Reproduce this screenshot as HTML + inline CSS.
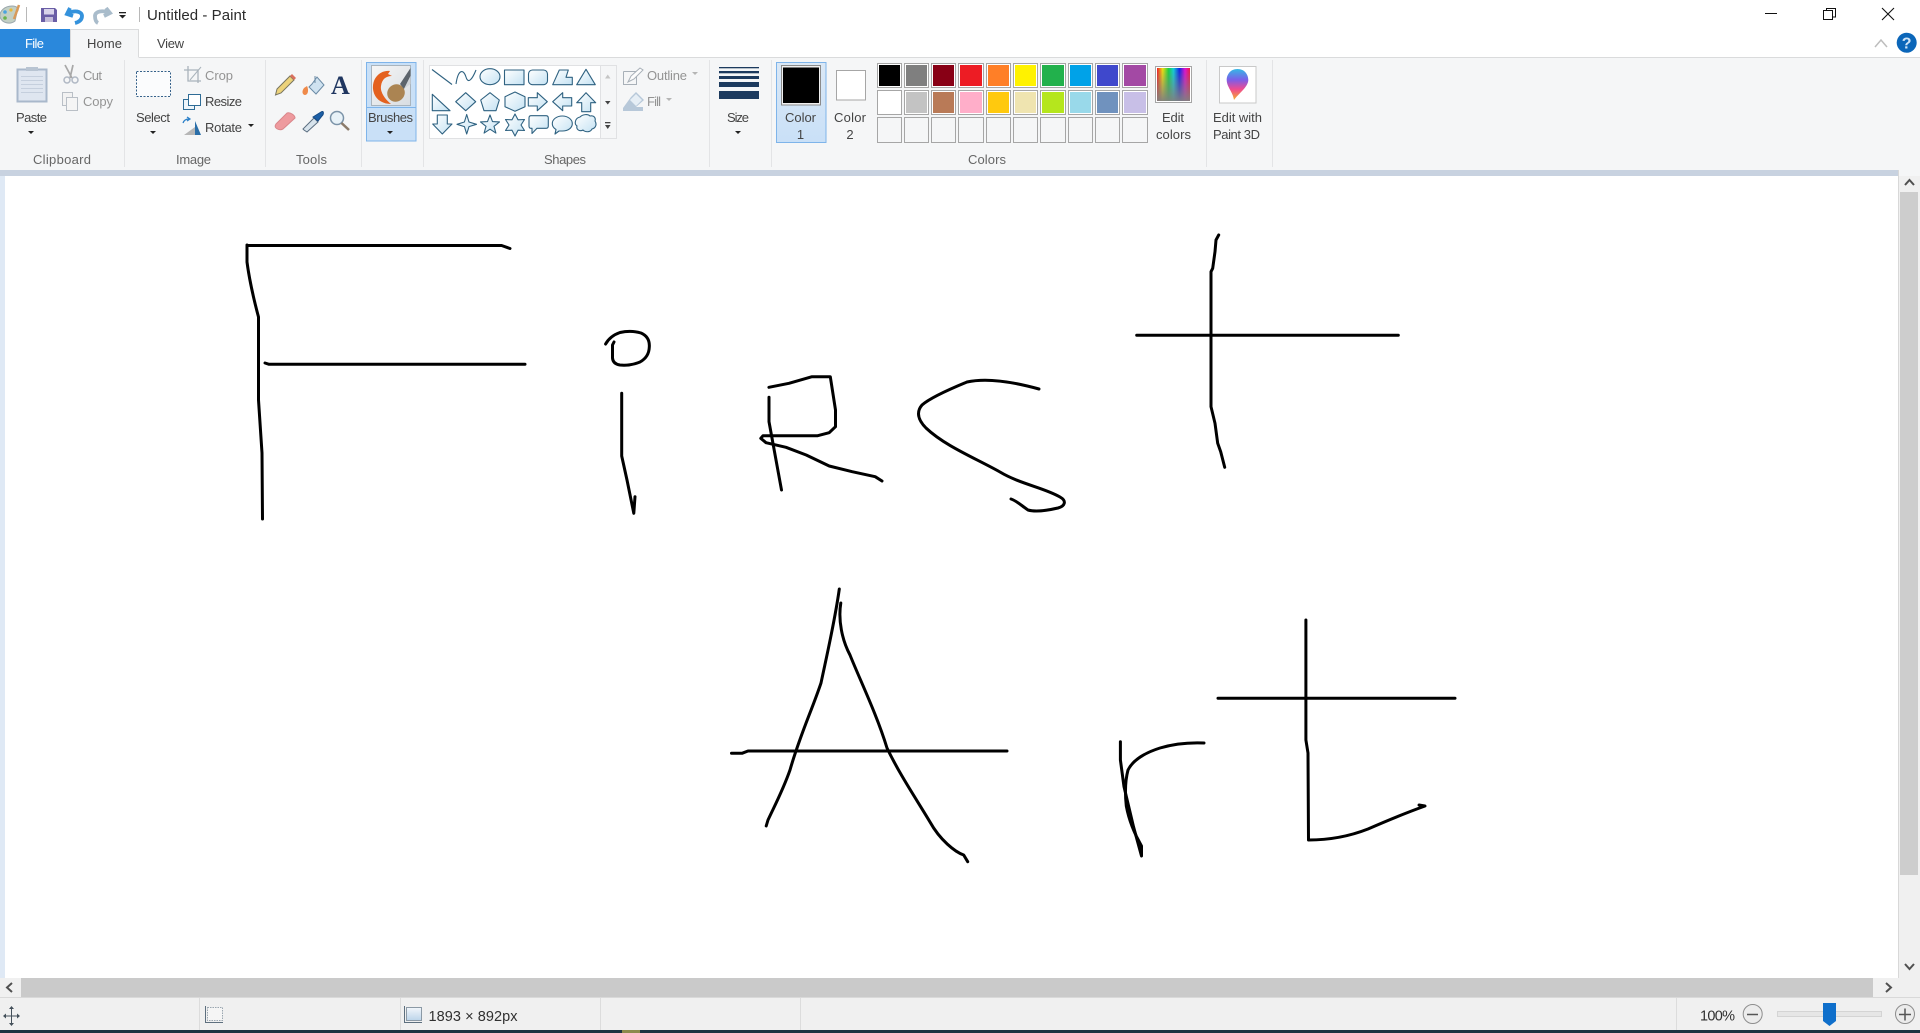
<!DOCTYPE html>
<html><head><meta charset="utf-8"><title>Untitled - Paint</title>
<style>
html,body{margin:0;padding:0;width:1920px;height:1033px;overflow:hidden;background:#fff}
svg{display:block;position:absolute;left:0;top:0}
text{font-family:"Liberation Sans",sans-serif;font-size:13px;fill:#444}
.g{fill:#949494}.l{fill:#666}
.ink{fill:none;stroke:#000;stroke-width:3;stroke-linejoin:round;stroke-linecap:round}
.sh{fill:url(#sg);stroke:#2f6281;stroke-width:1.1;stroke-linejoin:round}
.sep{stroke:#e3e4e6;stroke-width:1}
.sw{stroke:#a6a6a6;stroke-width:1;fill:#fff}
</style></head><body>
<svg width="1920" height="1033" viewBox="0 0 1920 1033" xmlns="http://www.w3.org/2000/svg">
<defs>
<linearGradient id="sg" x1="0" y1="0" x2="1" y2="1"><stop offset="0" stop-color="#ffffff"/><stop offset="1" stop-color="#c4e2f3"/></linearGradient>
<linearGradient id="rb" x1="0" y1="0" x2="1" y2="0"><stop offset="0" stop-color="#f01828"/><stop offset=".17" stop-color="#f0e010"/><stop offset=".35" stop-color="#18d040"/><stop offset=".5" stop-color="#10d0d8"/><stop offset=".68" stop-color="#1020e8"/><stop offset=".85" stop-color="#e010d0"/><stop offset="1" stop-color="#f01840"/></linearGradient>
<linearGradient id="gf" x1="0" y1="0" x2="0" y2="1"><stop offset="0" stop-color="#808080" stop-opacity="0"/><stop offset="1" stop-color="#808080" stop-opacity=".95"/></linearGradient>
<linearGradient id="dp" x1="0" y1="0" x2="0" y2="1"><stop offset="0" stop-color="#35b8e6"/><stop offset=".35" stop-color="#7c5ee8"/><stop offset=".65" stop-color="#ef4a90"/><stop offset="1" stop-color="#f4b02a"/></linearGradient>
<linearGradient id="br" x1="0" y1="0" x2="1" y2="1"><stop offset="0" stop-color="#f6f6f6"/><stop offset="1" stop-color="#d8dde2"/></linearGradient>
<linearGradient id="cb" x1="0" y1="0" x2="0" y2="1"><stop offset="0" stop-color="#dbe8f6"/><stop offset="1" stop-color="#c9e0f7"/></linearGradient>
<linearGradient id="b3" x1="0" y1="0" x2="0" y2="1"><stop offset="0" stop-color="#f2f6fb"/><stop offset="1" stop-color="#bcd4ea"/></linearGradient>
</defs>

<!-- title bar + tabs -->
<rect width="1920" height="58" fill="#fff"/>
<!-- app icon -->
<path d="M0,17 C-1,11 5,6 12,6 C17,6 20,9 17,12 L15,21 C10,25 2,23 0,17Z" fill="#c2cfc4" stroke="#9aa7ad"/>
<circle cx="5" cy="12" r="1.800" fill="#4aa3df"/><circle cx="5" cy="18" r="1.800" fill="#69b34c"/><circle cx="11" cy="10" r="1.600" fill="#e8b93a"/>
<path d="M19,5 L14,19" stroke="#d99a5a" stroke-width="2.500"/>
<line x1="26.500" y1="7" x2="26.500" y2="22" stroke="#b8b8b8"/>
<!-- save -->
<path d="M41,8 H55 L57,10 V22 H41Z" fill="#6a5ea6"/><rect x="44" y="9" width="10" height="5.500" fill="#d8d3ea"/><rect x="45" y="17" width="8" height="5" fill="#c3bcd9"/>
<!-- undo -->
<path d="M70,8 L67,14 L73,16 M68,13.500 C74,10 82,11 82,16 C82,20 79,22 75,23" fill="none" stroke="#3492dc" stroke-width="3.800"/>
<!-- redo -->
<path d="M106,8 L110,13 L104,16 M109,13 C103,10 95,11 95,16 C95,20 96,22 98,23" fill="none" stroke="#a9bccb" stroke-width="3.800"/>
<rect x="119" y="12" width="7" height="1.300" fill="#222"/><path d="M119,15 h7 l-3.500,3.500z" fill="#222"/>
<line x1="139.500" y1="7" x2="139.500" y2="22" stroke="#b8b8b8"/>
<text x="147" y="20" textLength="99" style="font-size:15px;fill:#2b2b2b">Untitled - Paint</text>
<!-- window controls -->
<line x1="1765" y1="13.500" x2="1777" y2="13.500" stroke="#111" stroke-width="1"/>
<rect x="1823.500" y="10.500" width="9" height="9" fill="none" stroke="#111"/><path d="M1826.500,10 V8.500 H1835.500 V17 H1833" fill="none" stroke="#111"/>
<path d="M1882,8 L1894,20 M1894,8 L1882,20" stroke="#111" stroke-width="1.100"/>
<path d="M1875,47 L1881,40 L1887,47" fill="none" stroke="#bdbdbd" stroke-width="1.500"/>
<circle cx="1906.700" cy="42.700" r="10" fill="#0b66b9"/>
<text x="1906.700" y="48.500" text-anchor="middle" style="font-size:16px;font-weight:bold;fill:#cfe4f7">?</text>
<!-- tabs -->
<rect x="0" y="29" width="70" height="28" fill="#2a88dc"/>
<text x="25" y="48" textLength="19" style="fill:#fff">File</text>
<rect x="70.500" y="29.500" width="68" height="29" fill="#f5f6f7" stroke="#dadbdc"/>
<text x="87" y="48" textLength="35">Home</text>
<text x="157" y="48" textLength="27">View</text>

<!-- ribbon -->
<rect x="0" y="57.500" width="1920" height="112.500" fill="#f5f6f7"/>
<line x1="0" y1="57.500" x2="70" y2="57.500" stroke="#dadbdc"/><line x1="139" y1="57.500" x2="1920" y2="57.500" stroke="#dadbdc"/>
<rect x="71" y="56" width="67" height="3" fill="#f5f6f7"/>
<g class="sep"><line x1="124.500" y1="60" x2="124.500" y2="167"/><line x1="265.500" y1="60" x2="265.500" y2="167"/><line x1="361.500" y1="60" x2="361.500" y2="167"/><line x1="423.500" y1="60" x2="423.500" y2="167"/><line x1="709.500" y1="60" x2="709.500" y2="167"/><line x1="771.500" y1="60" x2="771.500" y2="167"/><line x1="1206.500" y1="60" x2="1206.500" y2="167"/><line x1="1272.500" y1="60" x2="1272.500" y2="167"/></g>
<rect x="0" y="170" width="1898" height="6" fill="#c8d2e0"/>

<!-- paste -->
<rect x="17.500" y="69.500" width="29" height="32" fill="#dfe6f0" stroke="#a9b8cb" stroke-width="2"/>
<g stroke="#c5cfdd"><line x1="21" y1="76.500" x2="43" y2="76.500"/><line x1="21" y1="80.500" x2="43" y2="80.500"/><line x1="21" y1="84.500" x2="43" y2="84.500"/><line x1="21" y1="88.500" x2="43" y2="88.500"/><line x1="21" y1="92.500" x2="43" y2="92.500"/></g>
<rect x="26" y="67" width="12" height="4" fill="#b8c4d2"/>
<text x="16" y="122" textLength="31">Paste</text><path d="M28,131 h6 l-3,3z" fill="#222"/>
<!-- scissors / copy -->
<path d="M73,65 L70,78 M65,65 L72,78" stroke="#a8a8a8" stroke-width="1.700" fill="none"/><circle cx="67" cy="80" r="3" fill="none" stroke="#b0b8c4" stroke-width="1.500"/><circle cx="75" cy="80" r="3" fill="none" stroke="#b0b8c4" stroke-width="1.500"/>
<text x="83" y="80" textLength="19" class="g">Cut</text>
<rect x="62.500" y="92.500" width="10" height="13" fill="#f2f2f2" stroke="#b9bfc6"/><rect x="66.500" y="97.500" width="11" height="13" fill="#f5f5f5" stroke="#b9bfc6"/>
<text x="83" y="106" textLength="30" class="g">Copy</text>
<text x="33" y="164" textLength="58" class="l">Clipboard</text>
<!-- select -->
<rect x="136.500" y="71.500" width="34" height="25" fill="#fbfcfd" stroke="#35618a" stroke-dasharray="2 1.500"/>
<text x="136" y="122" textLength="34">Select</text><path d="M150,131 h6 l-3,3z" fill="#222"/>
<!-- crop -->
<path d="M188,66 V81 H201 M184,70 H198 V83" fill="none" stroke="#a9b3bb" stroke-width="1.300"/><path d="M190,80 L201,67" stroke="#a9b3bb"/>
<text x="205" y="80" textLength="28" class="g">Crop</text>
<!-- resize -->
<rect x="183.500" y="99.500" width="11" height="10" fill="#eef5fa" stroke="#2f6c96"/><rect x="188.500" y="94.500" width="12" height="11" fill="#fff" stroke="#2f6c96"/>
<text x="205" y="106" textLength="37">Resize</text>
<!-- rotate -->
<path d="M184,135 L195,127 V135Z" fill="#b6b6b6"/><path d="M195,135 V121 L201,135Z" fill="#2a6ea8"/><path d="M183,123 C184,120 186,119 189,119 M187,117 L190,119 L187,121" fill="none" stroke="#2a7fc8" stroke-width="1.200"/>
<text x="205" y="132" textLength="37">Rotate</text><path d="M248,124 h6 l-3,3z" fill="#222"/>
<text x="176" y="164" textLength="35" class="l">Image</text>
<!-- tools -->
<path d="M275.500,95 L277,89 L290,76 L294,80 L281,93Z" fill="#ecd27a" stroke="#77745f" stroke-width="1"/><path d="M290,76 L292,74 L296,78 L294,80Z" fill="#d9705e"/>
<path d="M312,84 L317,77 L324,85 L316,94 L309,87Z" fill="#cfe2f0" stroke="#6a8aa5"/><path d="M304,88 C301,92 303,95 305,95 C308,95 309,90 307,86Z" fill="#ef8a4a"/><path d="M315,76 V83" stroke="#6a8aa5"/>
<text x="331" y="94" textLength="19" style="font-family:'Liberation Serif',serif;font-size:26px;font-weight:bold;fill:#1f3660">A</text>
<path d="M276,124 L287,113 C290,112 295,115 295,118 L283,129 C279,131 273,128 276,124Z" fill="#ee9a9e" stroke="#d9868a"/>
<path d="M304,130 L303,129 L314,118 L318,122 L307,132Z" fill="#d7e3ec" stroke="#5a6d80"/><path d="M313,117 L321,112 C324,110 324,114 322,116 L318,121Z" fill="#1c5fa6" stroke="#174b85"/>
<circle cx="337" cy="118" r="6.500" fill="#e8f2f8" stroke="#7b93a8" stroke-width="1.500"/><path d="M341.500,123 L349,130" stroke="#8b7b6a" stroke-width="2.500"/>
<text x="296" y="164" textLength="31" class="l">Tools</text>
<!-- brushes -->
<rect x="366.500" y="62.500" width="49.500" height="78.500" fill="#c9e0f7" stroke="#7eb4ea"/>
<line x1="366" y1="107.500" x2="416" y2="107.500" stroke="#7eb4ea"/>
<rect x="371.500" y="65.500" width="39" height="40" fill="url(#br)" stroke="#a9b4bd"/>
<path d="M390,71 C380,70 372,78 373,89 C374,98 381,104 391,104 C386,100 380,93 381,86 C382,79 386,76 392,76 L388,74Z" fill="#e4611f"/>
<ellipse cx="396" cy="93" rx="9" ry="8.500" transform="rotate(-40 396 93)" fill="#ab8452"/>
<path d="M400,84 L404,89 L410.500,76 V68Z" fill="#5c646c"/><path d="M404,89 L410.500,76 V84Z" fill="#cfd4d9"/>
<text x="368" y="122" textLength="45">Brushes</text><path d="M387,131 h6 l-3,3z" fill="#222"/>

<!-- shapes gallery -->
<rect x="429.500" y="65.500" width="171" height="73" fill="#fff" stroke="#e0e1e3"/>
<rect x="600.500" y="65.500" width="16" height="73" fill="#f5f6f7" stroke="#e0e1e3"/>
<path d="M432,69.500 L452,84.500" stroke="#2f6281" stroke-width="1.100"/>
<path d="M456,84 C458,70 463,68 466,77 C468,84 472,80 476,70" fill="none" stroke="#2f6281" stroke-width="1.100"/>
<ellipse class="sh" cx="490" cy="76.700" rx="10" ry="8"/>
<rect class="sh" x="504.500" y="70" width="19.500" height="14.700"/>
<rect class="sh" x="528.500" y="70" width="19" height="14.700" rx="4"/>
<polygon class="sh" points="552.700,84.700 559.300,70 568.300,70 566,77.300 572.300,77.300 572.300,84.700"/>
<polygon class="sh" points="576.700,84.700 586,69.300 595.300,84.700"/>
<polygon class="sh" points="432.300,94.300 450,110.700 432.300,110.700"/>
<polygon class="sh" points="465.700,92.700 475.700,101.700 465.700,110.700 455.700,101.700"/>
<polygon class="sh" points="490,92.700 499.300,100 496,110.700 484,110.700 480.700,100"/>
<polygon class="sh" points="515,92 525,96.700 525,106.700 515,111.300 505,106.700 505,96.700"/>
<polygon class="sh" points="528.300,97.700 537.300,97.700 537.300,92.700 547.300,101.700 537.300,110.700 537.300,106 528.300,106"/>
<polygon class="sh" points="571.700,97.700 562.700,97.700 562.700,92.700 552.700,101.700 562.700,110.700 562.700,106 571.700,106"/>
<polygon class="sh" points="586,92.700 595.700,102.700 590.700,102.700 590.700,111.700 581.700,111.700 581.700,102.700 576.700,102.700"/>
<polygon class="sh" points="437.300,115 447.300,115 447.300,124 452,124 442.300,134 432.700,124 437.300,124"/>
<polygon class="sh" points="466.700,114.500 469,122 476.500,124.300 469,126.600 466.700,134 464.400,126.600 457,124.300 464.400,122"/>
<polygon class="sh" points="490,115 492.500,121.600 499.500,121.900 494,126.300 495.900,133.100 490,129.200 484.100,133.100 486,126.300 480.500,121.900 487.500,121.600"/>
<polygon class="sh" points="515,114 518,119.800 524.500,119.500 521,125 524.500,130.500 518,130.200 515,136 512,130.200 505.500,130.500 509,125 505.500,119.500 512,119.800"/>
<path class="sh" d="M531,115.700 H546 Q548.300,115.700 548.300,118 V126 Q548.300,128.300 546,128.300 H537 L532,133.500 V128.300 H531 Q529,128.300 529,126 V118 Q529,115.700 531,115.700Z"/>
<path class="sh" d="M562.300,116 C568,116 572.300,119.500 572.300,123.500 C572.300,128 568,131 562.300,131 L559,131 L555,134 L556,129.500 C553.500,128 552.300,126 552.300,123.500 C552.300,119.500 556.500,116 562.300,116Z"/>
<path class="sh" d="M580,117 C583,114 588,114 590,116 C594,115 596,118 595,121 C597,124 596,128 592,129 C590,133 585,132 583,130 C579,132 576,129 577,126 C574,124 575,118 580,117Z"/>
<path d="M605,78.500 h5.500 l-2.750,-4z" fill="#c5c5c5"/><path d="M605,101 h5.500 l-2.750,3.500z" fill="#444"/>
<rect x="605" y="122" width="5.500" height="1.300" fill="#444"/><path d="M605,125 h5.500 l-2.750,4z" fill="#444"/>
<!-- outline/fill -->
<path d="M623.500,71.500 H637 M623.500,71.500 V84.500 H636.500 V76" fill="none" stroke="#a8b0b8"/><path d="M628,82 L631,76 L640,68 L643,70 L634,79Z" fill="#fdfdfd" stroke="#a8b0b8"/>
<text x="647" y="80" textLength="40" class="g">Outline</text><path d="M692,72 h6 l-3,3z" fill="#b5b5b5"/>
<path d="M623,108 L631,97 L636,92 L644,100 L636,107 H643 V111 H623Z" fill="#b7c8d9"/><path d="M636,94 L642,100 L636,106 L630,100Z" fill="#e6eef5"/>
<text x="647" y="106" textLength="14" class="g">Fill</text><path d="M666,98 h6 l-3,3z" fill="#b5b5b5"/>
<text x="544" y="164" textLength="42" class="l">Shapes</text>
<!-- size -->
<g fill="#1c3a5e"><rect x="719" y="67" width="40" height="1.300"/><rect x="719" y="71" width="40" height="2.300"/><rect x="719" y="76" width="40" height="3"/><rect x="719" y="82" width="40" height="5"/><rect x="719" y="91" width="40" height="8"/></g>
<text x="727" y="122" textLength="22">Size</text><path d="M735,131 h6 l-3,3z" fill="#222"/>
<!-- color1 -->
<rect x="776.500" y="62.500" width="49.500" height="80" fill="url(#cb)" stroke="#7eb4ea"/>
<rect x="781.500" y="65.500" width="39" height="39.500" fill="#f0f0f0" stroke="#8b8b8b"/><rect x="783" y="67.500" width="36" height="35.500" fill="#000"/>
<text x="785" y="122" textLength="31">Color</text><text x="800.500" y="139" text-anchor="middle">1</text>
<!-- color2 -->
<rect x="836.500" y="70.500" width="29" height="29.500" class="sw"/>
<text x="834" y="122" textLength="32">Color</text><text x="850" y="139" text-anchor="middle">2</text>
<!-- palette -->
<g id="pal">
<g class="sw" style="fill:#fff">
<rect x="877.500" y="63.500" width="24" height="24"/><rect x="904.500" y="63.500" width="24" height="24"/><rect x="931.500" y="63.500" width="24" height="24"/><rect x="958.500" y="63.500" width="25" height="24"/><rect x="986.500" y="63.500" width="24" height="24"/><rect x="1013.500" y="63.500" width="24" height="24"/><rect x="1040.500" y="63.500" width="25" height="24"/><rect x="1068.500" y="63.500" width="24" height="24"/><rect x="1095.500" y="63.500" width="24" height="24"/><rect x="1122.500" y="63.500" width="25" height="24"/>
<rect x="877.500" y="90.500" width="24" height="24"/><rect x="904.500" y="90.500" width="24" height="24"/><rect x="931.500" y="90.500" width="24" height="24"/><rect x="958.500" y="90.500" width="25" height="24"/><rect x="986.500" y="90.500" width="24" height="24"/><rect x="1013.500" y="90.500" width="24" height="24"/><rect x="1040.500" y="90.500" width="25" height="24"/><rect x="1068.500" y="90.500" width="24" height="24"/><rect x="1095.500" y="90.500" width="24" height="24"/><rect x="1122.500" y="90.500" width="25" height="24"/>
</g>
<g style="fill:#f5f6f7;stroke:#a6a6a6">
<rect x="877.500" y="117.500" width="24" height="25"/><rect x="904.500" y="117.500" width="24" height="25"/><rect x="931.500" y="117.500" width="24" height="25"/><rect x="958.500" y="117.500" width="25" height="25"/><rect x="986.500" y="117.500" width="24" height="25"/><rect x="1013.500" y="117.500" width="24" height="25"/><rect x="1040.500" y="117.500" width="25" height="25"/><rect x="1068.500" y="117.500" width="24" height="25"/><rect x="1095.500" y="117.500" width="24" height="25"/><rect x="1122.500" y="117.500" width="25" height="25"/>
</g>
<rect x="879" y="65" width="21" height="21" fill="#000"/><rect x="906" y="65" width="21" height="21" fill="#7f7f7f"/><rect x="933" y="65" width="21" height="21" fill="#880015"/><rect x="960" y="65" width="22" height="21" fill="#ed1c24"/><rect x="988" y="65" width="21" height="21" fill="#ff7f27"/><rect x="1015" y="65" width="21" height="21" fill="#fff200"/><rect x="1042" y="65" width="22" height="21" fill="#22b14c"/><rect x="1070" y="65" width="21" height="21" fill="#00a2e8"/><rect x="1097" y="65" width="21" height="21" fill="#3f48cc"/><rect x="1124" y="65" width="22" height="21" fill="#a349a4"/>
<rect x="879" y="92" width="21" height="21" fill="#fff"/><rect x="906" y="92" width="21" height="21" fill="#c3c3c3"/><rect x="933" y="92" width="21" height="21" fill="#b97a57"/><rect x="960" y="92" width="22" height="21" fill="#ffaec9"/><rect x="988" y="92" width="21" height="21" fill="#ffc90e"/><rect x="1015" y="92" width="21" height="21" fill="#efe4b0"/><rect x="1042" y="92" width="22" height="21" fill="#b5e61d"/><rect x="1070" y="92" width="21" height="21" fill="#99d9ea"/><rect x="1097" y="92" width="21" height="21" fill="#7092be"/><rect x="1124" y="92" width="22" height="21" fill="#c8bfe7"/>
</g>
<text x="968" y="164" textLength="38" class="l">Colors</text>
<!-- edit colors -->
<rect x="1155.500" y="66.500" width="36" height="36" fill="#fff" stroke="#a6a6a6"/>
<rect x="1157" y="68" width="33" height="33" fill="url(#rb)"/><rect x="1157" y="68" width="33" height="33" fill="url(#gf)"/>
<text x="1162" y="122" textLength="22">Edit</text><text x="1156" y="139" textLength="35">colors</text>
<!-- paint 3d -->
<rect x="1219.500" y="66.500" width="36.500" height="36.500" fill="#fff" stroke="#c9c9c9"/>
<path d="M1237.500,69 C1230,69 1226.700,75 1226.700,80 C1226.700,87 1233,92 1234,100 C1238,94 1248.300,87 1248.300,80 C1248.300,75 1245,69 1237.500,69Z" fill="url(#dp)"/>
<text x="1213" y="122" textLength="49">Edit with</text><text x="1213" y="139" textLength="47">Paint 3D</text>

<!-- canvas area -->
<rect x="0" y="176" width="5" height="802" fill="#dfe9f5"/>
<rect x="5" y="176" width="1893" height="802" fill="#fff"/>
<g class="ink">
<!-- F -->
<path d="M247,245.500 H501.600 L510,248.500"/>
<path d="M247,245 V262 Q250,285 258.500,317 V400 L262,453 L262.500,519"/>
<path d="M265,363 L269,364.300 H525"/>
<!-- i -->
<path d="M614,342 L612.500,345 V358 Q613,364 620,365 Q630,366 640,362 Q649,357 649.300,347 Q650,337 641,333 Q631,330 620,332.500 Q610,336 605.600,344"/>
<path d="M621.700,393.300 V456 L627,480 L633.800,513.300 L635,496.700"/>
<!-- R -->
<polyline points="768.900,387.300 789,383.300 812,376.700 830.300,376.700 835.500,410 835.500,426.700 829.200,432.700 817.700,435.700 763,435.700 760.800,438.300 766,442.700 786,447.300 806.200,455 829.200,466 852.200,471.700 875.200,476.700 882,481"/>
<polyline points="769,397.300 769,421.700 781.500,490"/>
<!-- S -->
<path d="M1039,389 C1010,381 985,378 967,382 C950,389 930,398 922,405 C916,412 918,420 926,428 C945,446 975,458 1000,472 C1020,484 1045,488 1060,497 C1067,501 1065,506 1058,508 C1045,511 1035,512 1028,510 C1022,506 1017,501 1011,499"/>
<!-- t -->
<polyline points="1218.700,235 1216,240 1215,251.700 1212.700,268.300 1211,271.700 1211,406.700 1215,423.300 1217.700,443.300 1220.700,451.700 1224.700,467.300"/>
<polyline points="1136.700,335.300 1398.300,335.300"/>
<!-- A -->
<path d="M839.300,589 C835,620 828,650 821,683 C812,710 800,735 790,770 C783,790 775,805 768,820 L766.200,826"/>
<path d="M840.800,603 C838,620 842,640 850,655 C860,680 877,715 887,748 C900,775 915,797 930,822 C940,840 955,852 963.700,855 L967.700,861.700"/>
<polyline points="731.500,753.300 742,753.300 748,751 1007,751"/>
<!-- r -->
<polyline points="1120.400,741.700 1120.400,760 1124,786.700 1133.500,826.700 1141.500,856"/>
<path d="M1204,743 Q1180,742 1160,748 Q1135,756 1128,770 Q1124,785 1126.300,806 Q1130,826 1141.500,846 L1141.500,855"/>
<!-- t2 -->
<path d="M1305.900,620 V740 L1308,753 L1308.500,840 Q1340,840 1368,829 Q1400,815 1425,806 L1419,805"/>
<polyline points="1218,698.300 1455,698.300"/>
</g>

<!-- right scrollbar -->
<rect x="1898" y="176" width="22" height="802" fill="#f0f0f0"/>
<rect x="1898" y="170" width="22" height="6" fill="#f5f6f7"/>
<line x1="1898.500" y1="170" x2="1898.500" y2="978" stroke="#d8d8d8"/>
<rect x="1900" y="192" width="18" height="683" fill="#cdcdcd"/>
<path d="M1905,185 L1909.500,180 L1914,185" fill="none" stroke="#505050" stroke-width="2"/>
<path d="M1905,964 L1909.500,969 L1914,964" fill="none" stroke="#505050" stroke-width="2"/>
<!-- bottom scrollbar -->
<rect x="0" y="978" width="1920" height="19.500" fill="#f0f0f0"/>
<rect x="21" y="978" width="1852" height="19" fill="#cacaca"/>
<path d="M12,983 L7,987.500 L12,992" fill="none" stroke="#505050" stroke-width="2"/>
<path d="M1886,983 L1891,987.500 L1886,992" fill="none" stroke="#505050" stroke-width="2"/>
<!-- status -->
<rect x="0" y="997" width="1920" height="33" fill="#f0f0f0"/>
<line x1="0" y1="997.500" x2="1920" y2="997.500" stroke="#d9d9d9"/>
<g stroke="#dcdcdc"><line x1="199.500" y1="998" x2="199.500" y2="1030"/><line x1="400.500" y1="998" x2="400.500" y2="1030"/><line x1="600.500" y1="998" x2="600.500" y2="1030"/><line x1="800.500" y1="998" x2="800.500" y2="1030"/><line x1="1676.500" y1="998" x2="1676.500" y2="1030"/></g>
<path d="M11.500,1008 V1024 M4,1016 H19" stroke="#44505a" stroke-width="1"/>
<path d="M11.500,1006 l-2.500,3 h5z M11.500,1026 l-2.500,-3 h5z M3,1016 l3,-2.500 v5z M20,1016 l-3,-2.500 v5z" fill="#44505a"/>
<rect x="207.500" y="1007.500" width="15" height="13" fill="#f5f5f5" stroke="#9aa6b0" stroke-dasharray="1.500 1"/>
<path d="M205.500,1006 V1022.500 H223" fill="none" stroke="#5d6f7e"/>
<rect x="406.500" y="1007.500" width="15" height="13" fill="url(#b3)" stroke="#8b99a5"/>
<path d="M404.500,1006 V1022.500 H422" fill="none" stroke="#5d6f7e"/>
<text x="428.500" y="1021" textLength="89" style="font-size:14.500px;fill:#303030">1893 × 892px</text>
<text x="1700" y="1020.500" textLength="35" style="font-size:14.500px;fill:#303030">100%</text>
<circle cx="1752.700" cy="1014" r="9.500" fill="#ececec" stroke="#8e8e8e"/><line x1="1747" y1="1014.500" x2="1758" y2="1014.500" stroke="#555" stroke-width="1.500"/>
<rect x="1777.500" y="1011.500" width="104" height="5" fill="#e6e6e6" stroke="#d4d4d4"/>
<path d="M1823,1003 H1836 V1021 L1829.500,1026 L1823,1021Z" fill="#0f6fcb"/>
<circle cx="1905" cy="1014" r="9.500" fill="#ececec" stroke="#8e8e8e"/><path d="M1899,1014.500 H1911 M1905,1008.500 V1020.500" stroke="#555" stroke-width="1.500"/>
<!-- taskbar sliver -->
<rect x="0" y="1030" width="1920" height="3" fill="#1e3441"/>
<rect x="622" y="1030" width="18" height="3" fill="#8c8a4c"/>
</svg>
</body></html>
